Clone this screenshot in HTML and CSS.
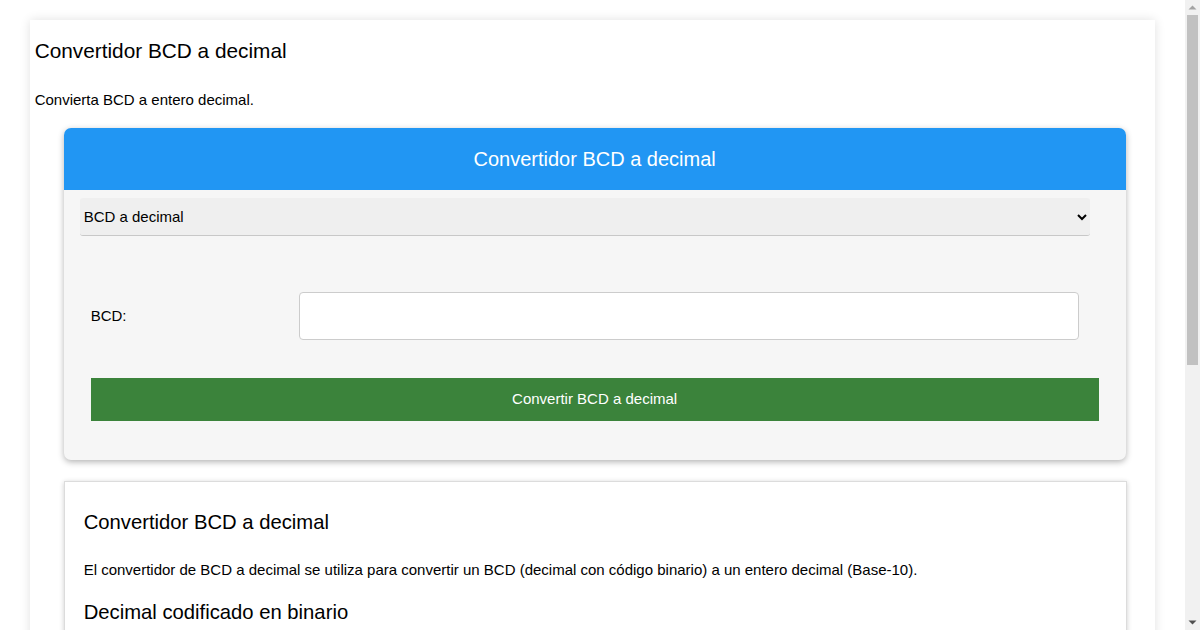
FILE: index.html
```html
<!DOCTYPE html>
<html lang="es">
<head>
<meta charset="utf-8">
<title>Convertidor BCD a decimal</title>
<link rel="stylesheet" href="styles.css">
</head>
<body>
<div class="page">
  <h1 class="page-title">Convertidor BCD a decimal</h1>
  <p class="lead">Convierta BCD a entero decimal.</p>

  <div class="tool-card">
    <div class="tool-header">Convertidor BCD a decimal</div>
    <div class="tool-body">
      <select class="mode-select">
        <option>BCD a decimal</option>
        <option>Decimal a BCD</option>
      </select>
      <div class="form-row">
        <label class="form-label" for="bcd">BCD:</label>
        <input class="form-input" id="bcd" type="text">
      </div>
      <button class="convert-btn" type="button">Convertir BCD a decimal</button>
    </div>
  </div>

  <div class="info-card">
    <h2 class="info-title">Convertidor BCD a decimal</h2>
    <p class="info-text">El convertidor de BCD a decimal se utiliza para convertir un BCD (decimal con código binario) a un entero decimal (Base-10).</p>
    <h2 class="info-title">Decimal codificado en binario</h2>
    <p class="info-text">El decimal codificado en binario (BCD) es una forma de representar números decimales en la que cada dígito decimal se codifica con cuatro bits binarios.</p>
    <p class="info-text">Por ejemplo, el número decimal 25 se representa en BCD como 0010 0101.</p>
    <h2 class="info-title">Cómo convertir BCD a decimal</h2>
    <p class="info-text">Divida el número BCD en grupos de cuatro bits y convierta cada grupo en su dígito decimal correspondiente.</p>
  </div>
</div>

<div class="scrollbar" aria-hidden="true">
  <svg class="scroll-arrow up" width="15" height="15" viewBox="0 0 15 15"><path d="M3.5 9.5 L7.5 5.5 L11.5 9.5 Z" fill="#a3a3a3"/></svg>
  <div class="scroll-track"><div class="scroll-thumb"></div></div>
  <svg class="scroll-arrow down" width="15" height="15" viewBox="0 0 15 15"><path d="M3.5 5.5 L7.5 9.5 L11.5 5.5 Z" fill="#505050"/></svg>
</div>
</body>
</html>
```

FILE: styles.css
```css
html, body {
  margin: 0;
  padding: 0;
  background: #ffffff;
}

body {
  font-family: "Liberation Sans", Arial, sans-serif;
  color: #000;
  margin-right: 15px;
}

.page {
  width: 95%;
  margin: 20px auto;
  padding: 5px;
  box-sizing: border-box;
  background: #fff;
  box-shadow: 0 0 10px rgba(0, 0, 0, 0.12);
}

.page-title {
  font-size: 20.8px;
  font-weight: normal;
  line-height: 23px;
  margin: 14px 0 0;
}

.lead {
  font-size: 15px;
  line-height: 17px;
  margin: 29px 0 0;
}

.tool-card {
  width: 1062px;
  margin: 20px 0 0 29px;
  background: #f6f6f6;
  border-radius: 7px;
  box-shadow: 0 2px 6px rgba(0, 0, 0, 0.3);
  overflow: hidden;
}

.tool-header {
  background: #2196f3;
  color: #fff;
  font-size: 20px;
  height: 62px;
  line-height: 62px;
  text-align: center;
}

.tool-body {
  padding: 8px 16px 39px;
}

.mode-select {
  display: block;
  width: 1010px;
  height: 38px;
  padding: 0;
  font-family: "Liberation Sans", Arial, sans-serif;
  font-size: 15px;
  color: #000;
  background-color: #efefef;
  border: none;
  border-bottom: 1px solid #c8c8c8;
  border-radius: 3px;
}

.form-row {
  display: flex;
  align-items: center;
  margin: 56px 0 0 11px;
}

.form-label {
  width: 208px;
  font-size: 15px;
  line-height: 17px;
  padding-bottom: 2px;
}

.form-input {
  width: 780px;
  height: 48px;
  box-sizing: border-box;
  border: 1px solid #cccccc;
  border-radius: 4px;
  background: #fff;
  font-size: 15px;
}

.convert-btn {
  display: block;
  width: 1008px;
  height: 43px;
  margin: 38px 0 0 11px;
  padding: 0 0 2px;
  border: none;
  background: #3b833b;
  color: #fff;
  font-family: "Liberation Sans", Arial, sans-serif;
  font-size: 15px;
}

.info-card {
  width: 1063px;
  box-sizing: border-box;
  margin: 21px 0 20px 29px;
  padding: 29px 19px 20px;
  background: #fff;
  border: 1px solid #dcdcdc;
  box-shadow: 0 1px 5px rgba(0, 0, 0, 0.2);
}

.info-title {
  font-size: 20.25px;
  font-weight: normal;
  line-height: 23px;
  margin: 0;
}

.info-text {
  font-size: 15px;
  line-height: 17px;
  margin: 27px 0 23px;
}

/* mimic of the browser's vertical scrollbar, drawn over the page edge */
.scrollbar {
  position: fixed;
  top: 0;
  right: 0;
  width: 15px;
  height: 100vh;
  background: #f1f1f1;
  display: flex;
  flex-direction: column;
}

.scroll-arrow {
  display: block;
  flex: none;
}

.scroll-track {
  flex: 1;
  padding: 0 2px;
}

.scroll-thumb {
  height: 350px;
  background: #c1c1c1;
}
```
